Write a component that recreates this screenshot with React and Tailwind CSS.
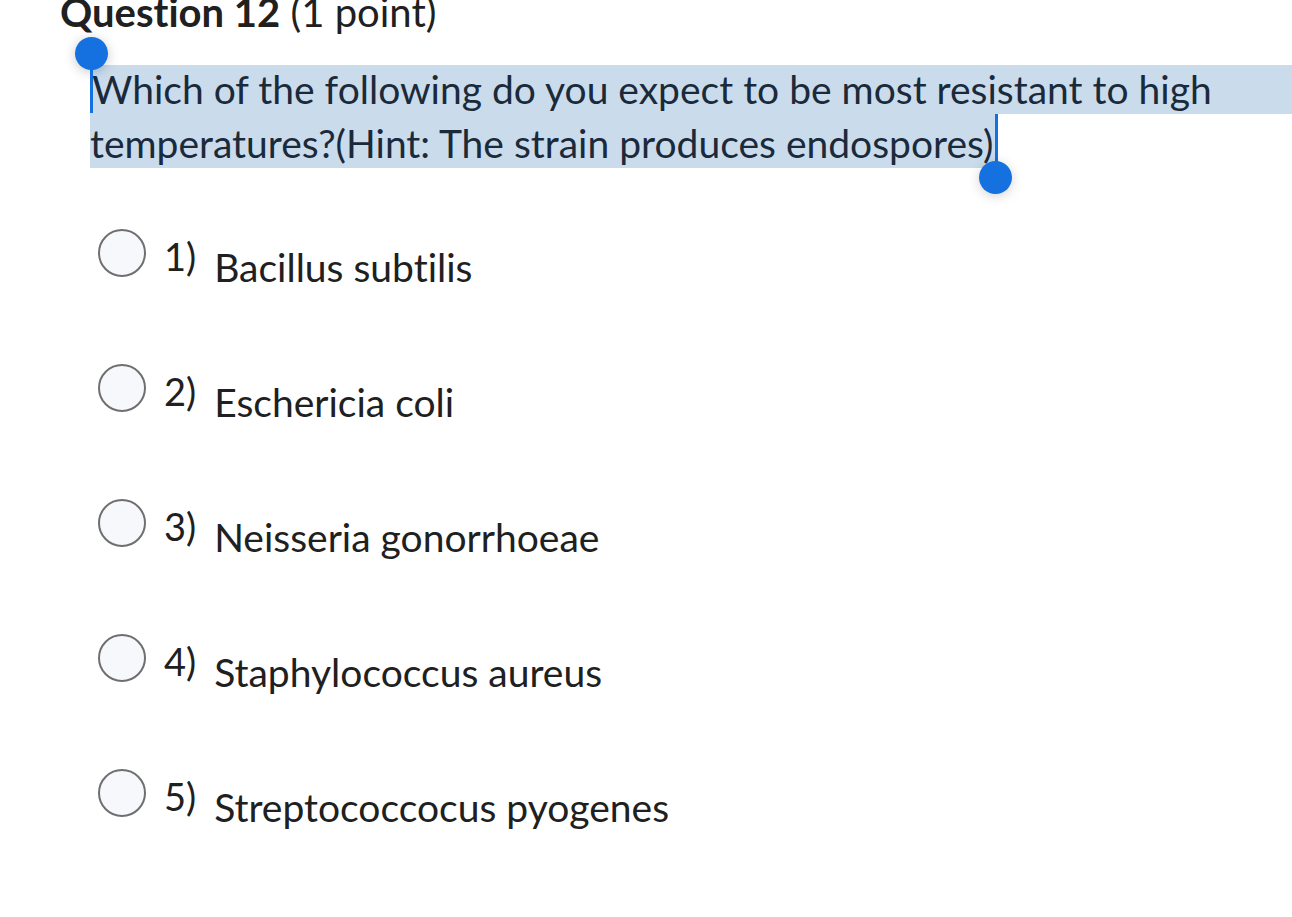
import React from "react";

const options = [
  ["1)", "Bacillus subtilis"],
  ["2)", "Eschericia coli"],
  ["3)", "Neisseria gonorrhoeae"],
  ["4)", "Staphylococcus aureus"],
  ["5)", "Streptococcocus pyogenes"],
];

export default function App() {
  return (
    <div className="relative w-[1292px] h-[917px] overflow-hidden bg-white font-['Lato',sans-serif] [font-variant-ligatures:none]">
      <div className="pl-[60px] -mt-[12px] h-[48px] leading-[48px] text-[40px] text-[#202020] whitespace-nowrap">
        <span className="font-bold">Question 12</span>{" "}
        <span className="font-normal">(1 point)</span>
      </div>

      <div className="relative mt-[29px] pl-[90px] text-[39px] text-[#1b2a3a]">
        <div className="h-[49px] leading-[49px] bg-[#cadcec] pl-[2px] whitespace-nowrap">
          Which of the following do you expect to be most resistant to high
        </div>
        <div className="h-[54px] leading-[0px]">
          <span className="h-[54px] leading-[58px] inline-block align-top bg-[#cadcec] pr-[2px] whitespace-nowrap">
            temperatures?(Hint: The strain produces endospores)
          </span>
        </div>

        {/* left selection handle */}
        <div className="absolute left-[75px] -top-[28px] w-[33px] h-[33px] rounded-full bg-[#1570e0] shadow-[0_2px_12px_rgba(0,0,0,0.22)]" />
        <div className="absolute left-[90px] top-[3px] w-[3px] h-[45px] bg-[#1570e0]" />

        {/* right selection handle */}
        <div className="absolute left-[995px] top-[49px] w-[3px] h-[58px] bg-[#1570e0]" />
        <div className="absolute left-[979px] top-[96px] w-[33px] h-[33px] rounded-full bg-[#1570e0] shadow-[0_2px_12px_rgba(0,0,0,0.18)]" />
      </div>

      <div className="mt-[61px] pl-[98px] flex flex-col">
        {options.map(([n, label]) => (
          <div key={n} className="flex items-start h-[135px]">
            <div className="w-[48px] h-[48px] rounded-full border-2 border-[#6f6f6f] bg-[#f7f8fc] shrink-0" />
            <span className="ml-[18px] mt-[4px] leading-[47px] text-[38px] text-[#202020]">{n}</span>
            <span className="ml-[18px] mt-[15px] leading-[47px] text-[39px] text-[#202020] whitespace-nowrap">{label}</span>
          </div>
        ))}
      </div>
    </div>
  );
}
